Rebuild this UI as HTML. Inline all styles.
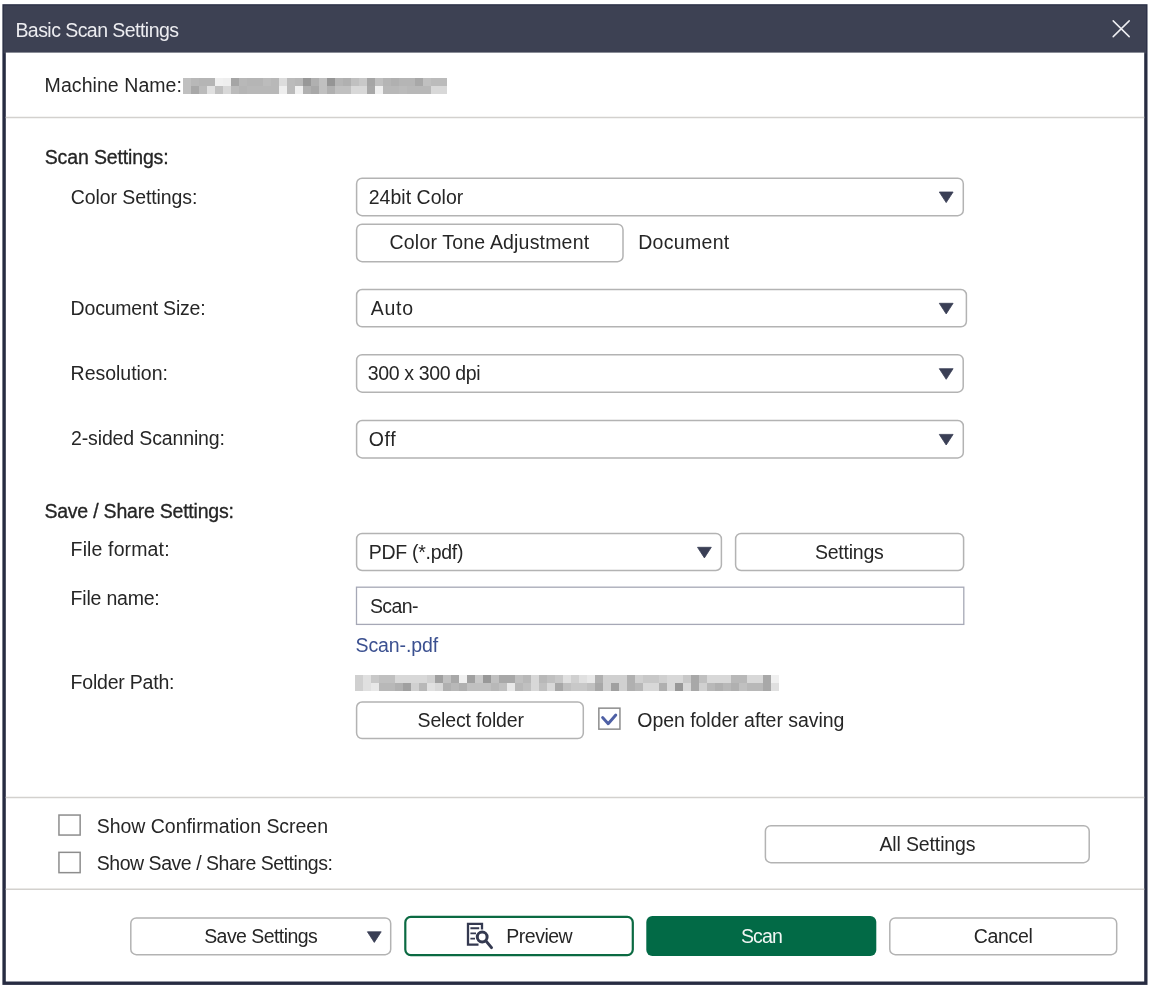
<!DOCTYPE html>
<html lang="en">
<head>
<meta charset="utf-8">
<title>Basic Scan Settings</title>
<style>
html,body{margin:0;padding:0;background:#fff;}
body{width:1152px;height:989px;position:relative;overflow:hidden;
  font-family:"Liberation Sans",sans-serif;font-size:19.5px;color:#262626;}
.t{filter:blur(0.4px);position:absolute;white-space:nowrap;line-height:24px;height:24px;transform-origin:0 50%;}
.title{color:#ececf0;}
.blue{color:#3b5090;}
.white{color:#f2f6f4;}
.hd{-webkit-text-stroke:0.3px #1b1b1b;}
svg{position:absolute;left:0;top:0;}
</style>
</head>
<body>
<svg width="1152" height="989" viewBox="0 0 1152 989"><rect x="2.4" y="4.2" width="1145.1" height="980.7" fill="#272c42"/><rect x="3.6" y="5.4" width="1142.7" height="48" fill="#3d4153"/><rect x="5.8" y="52.6" width="1138.4" height="928.9" fill="#fff"/><rect x="356.6" y="178.2" width="606.7" height="37.5" rx="5.5" fill="#fff" stroke="#b3b3b3" stroke-width="1.5"/><rect x="356.6" y="224.2" width="266.4" height="37.5" rx="5.5" fill="#fff" stroke="#b3b3b3" stroke-width="1.5"/><rect x="356.6" y="289.5" width="609.8" height="37.3" rx="5.5" fill="#fff" stroke="#b3b3b3" stroke-width="1.5"/><rect x="356.6" y="354.7" width="606.6" height="37.5" rx="5.5" fill="#fff" stroke="#b3b3b3" stroke-width="1.5"/><rect x="356.6" y="420.5" width="606.7" height="37.4" rx="5.5" fill="#fff" stroke="#b3b3b3" stroke-width="1.5"/><rect x="356.6" y="533.4" width="364.8" height="37.1" rx="5.5" fill="#fff" stroke="#b3b3b3" stroke-width="1.5"/><rect x="735.6" y="533.4" width="228.0" height="37.1" rx="5.5" fill="#fff" stroke="#b3b3b3" stroke-width="1.5"/><rect x="356.5" y="587.2" width="607.3" height="37.2" fill="#fff" stroke="#a6a8b6" stroke-width="1.3"/><rect x="356.6" y="702.0" width="226.7" height="36.6" rx="5.5" fill="#fff" stroke="#b3b3b3" stroke-width="1.5"/><rect x="765.4" y="825.7" width="323.8" height="37.0" rx="5.5" fill="#fff" stroke="#b3b3b3" stroke-width="1.5"/><rect x="130.8" y="917.9" width="259.9" height="36.8" rx="5.5" fill="#fff" stroke="#b3b3b3" stroke-width="1.5"/><rect x="405.3" y="916.9" width="227.5" height="38.2" rx="5.5" fill="#fff" stroke="#0b6a42" stroke-width="2.2"/><rect x="646.3" y="916.0" width="230.0" height="39.9" rx="6" fill="#026a46"/><rect x="889.8" y="917.9" width="226.9" height="36.8" rx="5.5" fill="#fff" stroke="#b3b3b3" stroke-width="1.5"/><path d="M939.3 192.0 h13.8 l-6.9 10.6 z" fill="#3a3f55" stroke="#3a3f55" stroke-width="0.8" stroke-linejoin="round"/><path d="M939.3 303.3 h13.8 l-6.9 10.6 z" fill="#3a3f55" stroke="#3a3f55" stroke-width="0.8" stroke-linejoin="round"/><path d="M939.3 368.7 h13.8 l-6.9 10.6 z" fill="#3a3f55" stroke="#3a3f55" stroke-width="0.8" stroke-linejoin="round"/><path d="M939.3 434.4 h13.8 l-6.9 10.6 z" fill="#3a3f55" stroke="#3a3f55" stroke-width="0.8" stroke-linejoin="round"/><path d="M697.5 547.3 h13.8 l-6.9 10.6 z" fill="#3a3f55" stroke="#3a3f55" stroke-width="0.8" stroke-linejoin="round"/><path d="M367.4 931.8 h13.8 l-6.9 10.6 z" fill="#3a3f55" stroke="#3a3f55" stroke-width="0.8" stroke-linejoin="round"/><rect x="598.85" y="708.15" width="21.10" height="21.00" fill="#fff" stroke="#8d8d8d" stroke-width="1.5"/><rect x="58.95" y="815.05" width="21.20" height="20.00" fill="#fff" stroke="#8d8d8d" stroke-width="1.5"/><rect x="58.95" y="852.35" width="21.20" height="20.30" fill="#fff" stroke="#8d8d8d" stroke-width="1.5"/><path d="M602.6 717.6 L608.2 723.7 L615.8 715.0" fill="none" stroke="#4e60a5" stroke-width="2.9" stroke-linecap="round" stroke-linejoin="round"/><path d="M1113.2 20.9 L1129.2 36.6 M1129.2 20.9 L1113.2 36.6" fill="none" stroke="#eeeef2" stroke-width="1.5" stroke-linecap="round"/><g fill="none" stroke="#343950" stroke-width="2.3"><path d="M482.0 929.5 V923.9 H468.0 V944.7 H478.5"/><path d="M470.4 928.3 H479.2 M470.4 933.4 H476 M470.4 938.6 H475" stroke-width="1.9"/><circle cx="482.2" cy="937.0" r="4.9" fill="#fff" stroke-width="3"/><path d="M486.3 941.4 L491.5 947.6" stroke-width="3" stroke-linecap="round"/></g><path d="M5.7 117.6 H1144.3" stroke="#d3d1ce" stroke-width="1.5"/><path d="M5.7 797.4 H1144.3" stroke="#d3d1ce" stroke-width="1.5"/><path d="M5.7 889.2 H1144.3" stroke="#d3d1ce" stroke-width="1.5"/></svg>
<svg width="1152" height="989" viewBox="0 0 1152 989" shape-rendering="crispEdges"><rect x="182.5" y="77.5" width="8.3" height="8.3" fill="rgb(192,192,192)"/><rect x="190.5" y="77.5" width="8.3" height="8.3" fill="rgb(184,184,184)"/><rect x="198.5" y="77.5" width="8.3" height="8.3" fill="rgb(181,181,181)"/><rect x="206.5" y="77.5" width="8.3" height="8.3" fill="rgb(181,181,181)"/><rect x="214.5" y="77.5" width="8.3" height="8.3" fill="rgb(240,240,240)"/><rect x="222.5" y="77.5" width="8.3" height="8.3" fill="rgb(238,238,238)"/><rect x="230.5" y="77.5" width="8.3" height="8.3" fill="rgb(165,165,165)"/><rect x="238.5" y="77.5" width="8.3" height="8.3" fill="rgb(184,184,184)"/><rect x="246.5" y="77.5" width="8.3" height="8.3" fill="rgb(181,181,181)"/><rect x="254.5" y="77.5" width="8.3" height="8.3" fill="rgb(181,181,181)"/><rect x="262.5" y="77.5" width="8.3" height="8.3" fill="rgb(188,188,188)"/><rect x="270.5" y="77.5" width="8.3" height="8.3" fill="rgb(184,184,184)"/><rect x="278.5" y="77.5" width="8.3" height="8.3" fill="rgb(220,220,220)"/><rect x="286.5" y="77.5" width="8.3" height="8.3" fill="rgb(187,187,187)"/><rect x="294.5" y="77.5" width="8.3" height="8.3" fill="rgb(184,184,184)"/><rect x="302.5" y="77.5" width="8.3" height="8.3" fill="rgb(152,152,152)"/><rect x="310.5" y="77.5" width="8.3" height="8.3" fill="rgb(176,176,176)"/><rect x="318.5" y="77.5" width="8.3" height="8.3" fill="rgb(192,192,192)"/><rect x="326.5" y="77.5" width="8.3" height="8.3" fill="rgb(149,149,149)"/><rect x="334.5" y="77.5" width="8.3" height="8.3" fill="rgb(181,181,181)"/><rect x="342.5" y="77.5" width="8.3" height="8.3" fill="rgb(176,176,176)"/><rect x="350.5" y="77.5" width="8.3" height="8.3" fill="rgb(192,192,192)"/><rect x="358.5" y="77.5" width="8.3" height="8.3" fill="rgb(200,200,200)"/><rect x="366.5" y="77.5" width="8.3" height="8.3" fill="rgb(165,165,165)"/><rect x="374.5" y="77.5" width="8.3" height="8.3" fill="rgb(192,192,192)"/><rect x="382.5" y="77.5" width="8.3" height="8.3" fill="rgb(181,181,181)"/><rect x="390.5" y="77.5" width="8.3" height="8.3" fill="rgb(176,176,176)"/><rect x="398.5" y="77.5" width="8.3" height="8.3" fill="rgb(181,181,181)"/><rect x="406.5" y="77.5" width="8.3" height="8.3" fill="rgb(181,181,181)"/><rect x="414.5" y="77.5" width="8.3" height="8.3" fill="rgb(168,168,168)"/><rect x="422.5" y="77.5" width="8.3" height="8.3" fill="rgb(192,192,192)"/><rect x="430.5" y="77.5" width="8.3" height="8.3" fill="rgb(187,187,187)"/><rect x="438.5" y="77.5" width="8.3" height="8.3" fill="rgb(187,187,187)"/><rect x="182.5" y="85.5" width="8.3" height="8.3" fill="rgb(192,192,192)"/><rect x="190.5" y="85.5" width="8.3" height="8.3" fill="rgb(168,168,168)"/><rect x="198.5" y="85.5" width="8.3" height="8.3" fill="rgb(187,187,187)"/><rect x="206.5" y="85.5" width="8.3" height="8.3" fill="rgb(224,224,224)"/><rect x="214.5" y="85.5" width="8.3" height="8.3" fill="rgb(192,192,192)"/><rect x="222.5" y="85.5" width="8.3" height="8.3" fill="rgb(216,216,216)"/><rect x="230.5" y="85.5" width="8.3" height="8.3" fill="rgb(187,187,187)"/><rect x="238.5" y="85.5" width="8.3" height="8.3" fill="rgb(181,181,181)"/><rect x="246.5" y="85.5" width="8.3" height="8.3" fill="rgb(184,184,184)"/><rect x="254.5" y="85.5" width="8.3" height="8.3" fill="rgb(184,184,184)"/><rect x="262.5" y="85.5" width="8.3" height="8.3" fill="rgb(184,184,184)"/><rect x="270.5" y="85.5" width="8.3" height="8.3" fill="rgb(184,184,184)"/><rect x="278.5" y="85.5" width="8.3" height="8.3" fill="rgb(238,238,238)"/><rect x="286.5" y="85.5" width="8.3" height="8.3" fill="rgb(187,187,187)"/><rect x="294.5" y="85.5" width="8.3" height="8.3" fill="rgb(240,240,240)"/><rect x="302.5" y="85.5" width="8.3" height="8.3" fill="rgb(176,176,176)"/><rect x="310.5" y="85.5" width="8.3" height="8.3" fill="rgb(168,168,168)"/><rect x="318.5" y="85.5" width="8.3" height="8.3" fill="rgb(192,192,192)"/><rect x="326.5" y="85.5" width="8.3" height="8.3" fill="rgb(176,176,176)"/><rect x="334.5" y="85.5" width="8.3" height="8.3" fill="rgb(192,192,192)"/><rect x="342.5" y="85.5" width="8.3" height="8.3" fill="rgb(192,192,192)"/><rect x="350.5" y="85.5" width="8.3" height="8.3" fill="rgb(216,216,216)"/><rect x="358.5" y="85.5" width="8.3" height="8.3" fill="rgb(216,216,216)"/><rect x="366.5" y="85.5" width="8.3" height="8.3" fill="rgb(168,168,168)"/><rect x="374.5" y="85.5" width="8.3" height="8.3" fill="rgb(240,240,240)"/><rect x="382.5" y="85.5" width="8.3" height="8.3" fill="rgb(184,184,184)"/><rect x="390.5" y="85.5" width="8.3" height="8.3" fill="rgb(184,184,184)"/><rect x="398.5" y="85.5" width="8.3" height="8.3" fill="rgb(187,187,187)"/><rect x="406.5" y="85.5" width="8.3" height="8.3" fill="rgb(184,184,184)"/><rect x="414.5" y="85.5" width="8.3" height="8.3" fill="rgb(184,184,184)"/><rect x="422.5" y="85.5" width="8.3" height="8.3" fill="rgb(184,184,184)"/><rect x="430.5" y="85.5" width="8.3" height="8.3" fill="rgb(216,216,216)"/><rect x="438.5" y="85.5" width="8.3" height="8.3" fill="rgb(216,216,216)"/><rect x="354.5" y="674.7" width="8.3" height="8.3" fill="rgb(208,208,208)"/><rect x="362.5" y="674.7" width="8.3" height="8.3" fill="rgb(224,224,224)"/><rect x="370.5" y="674.7" width="8.3" height="8.3" fill="rgb(200,200,200)"/><rect x="378.5" y="674.7" width="8.3" height="8.3" fill="rgb(192,192,192)"/><rect x="386.5" y="674.7" width="8.3" height="8.3" fill="rgb(192,192,192)"/><rect x="394.5" y="674.7" width="8.3" height="8.3" fill="rgb(216,216,216)"/><rect x="402.5" y="674.7" width="8.3" height="8.3" fill="rgb(216,216,216)"/><rect x="410.5" y="674.7" width="8.3" height="8.3" fill="rgb(216,216,216)"/><rect x="418.5" y="674.7" width="8.3" height="8.3" fill="rgb(216,216,216)"/><rect x="426.5" y="674.7" width="8.3" height="8.3" fill="rgb(208,208,208)"/><rect x="434.5" y="674.7" width="8.3" height="8.3" fill="rgb(160,160,160)"/><rect x="442.5" y="674.7" width="8.3" height="8.3" fill="rgb(192,192,192)"/><rect x="450.5" y="674.7" width="8.3" height="8.3" fill="rgb(168,168,168)"/><rect x="458.5" y="674.7" width="8.3" height="8.3" fill="rgb(240,240,240)"/><rect x="466.5" y="674.7" width="8.3" height="8.3" fill="rgb(160,160,160)"/><rect x="474.5" y="674.7" width="8.3" height="8.3" fill="rgb(200,200,200)"/><rect x="482.5" y="674.7" width="8.3" height="8.3" fill="rgb(152,152,152)"/><rect x="490.5" y="674.7" width="8.3" height="8.3" fill="rgb(192,192,192)"/><rect x="498.5" y="674.7" width="8.3" height="8.3" fill="rgb(168,168,168)"/><rect x="506.5" y="674.7" width="8.3" height="8.3" fill="rgb(168,168,168)"/><rect x="514.5" y="674.7" width="8.3" height="8.3" fill="rgb(192,192,192)"/><rect x="522.5" y="674.7" width="8.3" height="8.3" fill="rgb(184,184,184)"/><rect x="530.5" y="674.7" width="8.3" height="8.3" fill="rgb(216,216,216)"/><rect x="538.5" y="674.7" width="8.3" height="8.3" fill="rgb(184,184,184)"/><rect x="546.5" y="674.7" width="8.3" height="8.3" fill="rgb(192,192,192)"/><rect x="554.5" y="674.7" width="8.3" height="8.3" fill="rgb(200,200,200)"/><rect x="562.5" y="674.7" width="8.3" height="8.3" fill="rgb(224,224,224)"/><rect x="570.5" y="674.7" width="8.3" height="8.3" fill="rgb(208,208,208)"/><rect x="578.5" y="674.7" width="8.3" height="8.3" fill="rgb(224,224,224)"/><rect x="586.5" y="674.7" width="8.3" height="8.3" fill="rgb(232,232,232)"/><rect x="594.5" y="674.7" width="8.3" height="8.3" fill="rgb(176,176,176)"/><rect x="602.5" y="674.7" width="8.3" height="8.3" fill="rgb(208,208,208)"/><rect x="610.5" y="674.7" width="8.3" height="8.3" fill="rgb(208,208,208)"/><rect x="618.5" y="674.7" width="8.3" height="8.3" fill="rgb(208,208,208)"/><rect x="626.5" y="674.7" width="8.3" height="8.3" fill="rgb(176,176,176)"/><rect x="634.5" y="674.7" width="8.3" height="8.3" fill="rgb(208,208,208)"/><rect x="642.5" y="674.7" width="8.3" height="8.3" fill="rgb(200,200,200)"/><rect x="650.5" y="674.7" width="8.3" height="8.3" fill="rgb(200,200,200)"/><rect x="658.5" y="674.7" width="8.3" height="8.3" fill="rgb(208,208,208)"/><rect x="666.5" y="674.7" width="8.3" height="8.3" fill="rgb(216,216,216)"/><rect x="674.5" y="674.7" width="8.3" height="8.3" fill="rgb(216,216,216)"/><rect x="682.5" y="674.7" width="8.3" height="8.3" fill="rgb(200,200,200)"/><rect x="690.5" y="674.7" width="8.3" height="8.3" fill="rgb(168,168,168)"/><rect x="698.5" y="674.7" width="8.3" height="8.3" fill="rgb(192,192,192)"/><rect x="706.5" y="674.7" width="8.3" height="8.3" fill="rgb(216,216,216)"/><rect x="714.5" y="674.7" width="8.3" height="8.3" fill="rgb(216,216,216)"/><rect x="722.5" y="674.7" width="8.3" height="8.3" fill="rgb(216,216,216)"/><rect x="730.5" y="674.7" width="8.3" height="8.3" fill="rgb(184,184,184)"/><rect x="738.5" y="674.7" width="8.3" height="8.3" fill="rgb(184,184,184)"/><rect x="746.5" y="674.7" width="8.3" height="8.3" fill="rgb(216,216,216)"/><rect x="754.5" y="674.7" width="8.3" height="8.3" fill="rgb(216,216,216)"/><rect x="762.5" y="674.7" width="8.3" height="8.3" fill="rgb(168,168,168)"/><rect x="770.5" y="674.7" width="8.3" height="8.3" fill="rgb(240,240,240)"/><rect x="354.5" y="682.7" width="8.3" height="8.3" fill="rgb(208,208,208)"/><rect x="362.5" y="682.7" width="8.3" height="8.3" fill="rgb(224,224,224)"/><rect x="370.5" y="682.7" width="8.3" height="8.3" fill="rgb(232,232,232)"/><rect x="378.5" y="682.7" width="8.3" height="8.3" fill="rgb(184,184,184)"/><rect x="386.5" y="682.7" width="8.3" height="8.3" fill="rgb(184,184,184)"/><rect x="394.5" y="682.7" width="8.3" height="8.3" fill="rgb(176,176,176)"/><rect x="402.5" y="682.7" width="8.3" height="8.3" fill="rgb(160,160,160)"/><rect x="410.5" y="682.7" width="8.3" height="8.3" fill="rgb(208,208,208)"/><rect x="418.5" y="682.7" width="8.3" height="8.3" fill="rgb(184,184,184)"/><rect x="426.5" y="682.7" width="8.3" height="8.3" fill="rgb(224,224,224)"/><rect x="434.5" y="682.7" width="8.3" height="8.3" fill="rgb(216,216,216)"/><rect x="442.5" y="682.7" width="8.3" height="8.3" fill="rgb(176,176,176)"/><rect x="450.5" y="682.7" width="8.3" height="8.3" fill="rgb(184,184,184)"/><rect x="458.5" y="682.7" width="8.3" height="8.3" fill="rgb(176,176,176)"/><rect x="466.5" y="682.7" width="8.3" height="8.3" fill="rgb(192,192,192)"/><rect x="474.5" y="682.7" width="8.3" height="8.3" fill="rgb(192,192,192)"/><rect x="482.5" y="682.7" width="8.3" height="8.3" fill="rgb(192,192,192)"/><rect x="490.5" y="682.7" width="8.3" height="8.3" fill="rgb(184,184,184)"/><rect x="498.5" y="682.7" width="8.3" height="8.3" fill="rgb(192,192,192)"/><rect x="506.5" y="682.7" width="8.3" height="8.3" fill="rgb(232,232,232)"/><rect x="514.5" y="682.7" width="8.3" height="8.3" fill="rgb(184,184,184)"/><rect x="522.5" y="682.7" width="8.3" height="8.3" fill="rgb(192,192,192)"/><rect x="530.5" y="682.7" width="8.3" height="8.3" fill="rgb(216,216,216)"/><rect x="538.5" y="682.7" width="8.3" height="8.3" fill="rgb(192,192,192)"/><rect x="546.5" y="682.7" width="8.3" height="8.3" fill="rgb(216,216,216)"/><rect x="554.5" y="682.7" width="8.3" height="8.3" fill="rgb(168,168,168)"/><rect x="562.5" y="682.7" width="8.3" height="8.3" fill="rgb(192,192,192)"/><rect x="570.5" y="682.7" width="8.3" height="8.3" fill="rgb(200,200,200)"/><rect x="578.5" y="682.7" width="8.3" height="8.3" fill="rgb(200,200,200)"/><rect x="586.5" y="682.7" width="8.3" height="8.3" fill="rgb(192,192,192)"/><rect x="594.5" y="682.7" width="8.3" height="8.3" fill="rgb(168,168,168)"/><rect x="602.5" y="682.7" width="8.3" height="8.3" fill="rgb(208,208,208)"/><rect x="610.5" y="682.7" width="8.3" height="8.3" fill="rgb(160,160,160)"/><rect x="618.5" y="682.7" width="8.3" height="8.3" fill="rgb(208,208,208)"/><rect x="626.5" y="682.7" width="8.3" height="8.3" fill="rgb(176,176,176)"/><rect x="634.5" y="682.7" width="8.3" height="8.3" fill="rgb(184,184,184)"/><rect x="642.5" y="682.7" width="8.3" height="8.3" fill="rgb(216,216,216)"/><rect x="650.5" y="682.7" width="8.3" height="8.3" fill="rgb(216,216,216)"/><rect x="658.5" y="682.7" width="8.3" height="8.3" fill="rgb(176,176,176)"/><rect x="666.5" y="682.7" width="8.3" height="8.3" fill="rgb(216,216,216)"/><rect x="674.5" y="682.7" width="8.3" height="8.3" fill="rgb(152,152,152)"/><rect x="682.5" y="682.7" width="8.3" height="8.3" fill="rgb(216,216,216)"/><rect x="690.5" y="682.7" width="8.3" height="8.3" fill="rgb(168,168,168)"/><rect x="698.5" y="682.7" width="8.3" height="8.3" fill="rgb(208,208,208)"/><rect x="706.5" y="682.7" width="8.3" height="8.3" fill="rgb(184,184,184)"/><rect x="714.5" y="682.7" width="8.3" height="8.3" fill="rgb(176,176,176)"/><rect x="722.5" y="682.7" width="8.3" height="8.3" fill="rgb(184,184,184)"/><rect x="730.5" y="682.7" width="8.3" height="8.3" fill="rgb(176,176,176)"/><rect x="738.5" y="682.7" width="8.3" height="8.3" fill="rgb(192,192,192)"/><rect x="746.5" y="682.7" width="8.3" height="8.3" fill="rgb(184,184,184)"/><rect x="754.5" y="682.7" width="8.3" height="8.3" fill="rgb(184,184,184)"/><rect x="762.5" y="682.7" width="8.3" height="8.3" fill="rgb(168,168,168)"/><rect x="770.5" y="682.7" width="8.3" height="8.3" fill="rgb(224,224,224)"/></svg>
<div class="t title" style="left:15.38px;top:18.00px;letter-spacing:-0.545px;">Basic Scan Settings</div>
<div class="t " style="left:44.62px;top:73.00px;letter-spacing:0.063px;">Machine Name:</div>
<div class="t hd" style="left:44.72px;top:145.00px;letter-spacing:-0.139px;">Scan Settings:</div>
<div class="t " style="left:70.80px;top:185.00px;letter-spacing:-0.098px;">Color Settings:</div>
<div class="t " style="left:368.65px;top:185.00px;letter-spacing:0.038px;">24bit Color</div>
<div class="t " style="left:389.58px;top:230.00px;letter-spacing:0.183px;">Color Tone Adjustment</div>
<div class="t " style="left:638.21px;top:230.00px;letter-spacing:0.311px;">Document</div>
<div class="t " style="left:70.62px;top:296.00px;letter-spacing:-0.202px;">Document Size:</div>
<div class="t " style="left:370.64px;top:296.00px;letter-spacing:0.775px;">Auto</div>
<div class="t " style="left:70.62px;top:361.00px;letter-spacing:-0.025px;">Resolution:</div>
<div class="t " style="left:367.81px;top:361.00px;letter-spacing:-0.365px;">300 x 300 dpi</div>
<div class="t " style="left:71.03px;top:426.00px;letter-spacing:-0.135px;">2-sided Scanning:</div>
<div class="t " style="left:368.66px;top:427.00px;letter-spacing:0.705px;">Off</div>
<div class="t hd" style="left:44.42px;top:499.00px;letter-spacing:-0.217px;">Save / Share Settings:</div>
<div class="t " style="left:70.62px;top:537.00px;letter-spacing:0.130px;">File format:</div>
<div class="t " style="left:368.83px;top:540.00px;letter-spacing:-0.286px;">PDF (*.pdf)</div>
<div class="t " style="left:814.89px;top:540.00px;letter-spacing:-0.214px;">Settings</div>
<div class="t " style="left:70.62px;top:586.00px;letter-spacing:-0.209px;">File name:</div>
<div class="t " style="left:369.93px;top:594.00px;letter-spacing:-0.593px;">Scan-</div>
<div class="t blue" style="left:355.49px;top:633.00px;letter-spacing:-0.107px;">Scan-.pdf</div>
<div class="t " style="left:70.62px;top:670.00px;letter-spacing:-0.213px;">Folder Path:</div>
<div class="t " style="left:417.55px;top:708.00px;letter-spacing:-0.168px;">Select folder</div>
<div class="t " style="left:637.32px;top:708.00px;letter-spacing:-0.046px;">Open folder after saving</div>
<div class="t " style="left:96.71px;top:814.00px;letter-spacing:-0.027px;">Show Confirmation Screen</div>
<div class="t " style="left:96.71px;top:851.00px;letter-spacing:-0.463px;">Show Save / Share Settings:</div>
<div class="t " style="left:879.44px;top:832.00px;letter-spacing:-0.136px;">All Settings</div>
<div class="t " style="left:204.16px;top:924.00px;letter-spacing:-0.558px;">Save Settings</div>
<div class="t " style="left:506.37px;top:924.00px;letter-spacing:-0.514px;">Preview</div>
<div class="t white" style="left:740.93px;top:924.00px;letter-spacing:-0.821px;">Scan</div>
<div class="t " style="left:973.77px;top:924.00px;letter-spacing:-0.315px;">Cancel</div>
</body>
</html>
